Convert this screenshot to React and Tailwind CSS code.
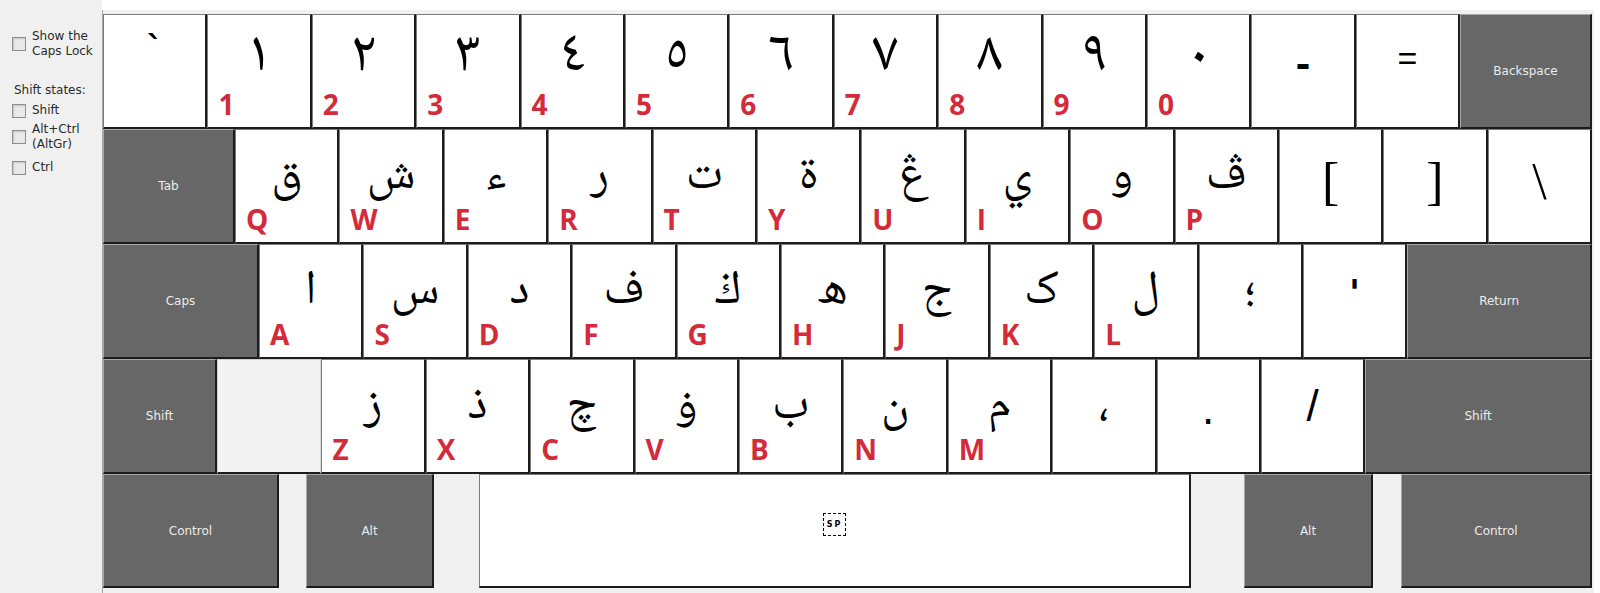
const ui = { fontFamily: '"DejaVu Sans", "Liberation Sans", sans-serif' };
const arabic = { fontFamily: '"Noto Naskh Arabic", "Noto Sans Arabic", "DejaVu Sans", sans-serif' };
const latin = { fontFamily: '"Open Sans", "Liberation Sans", sans-serif' };

const rows = [
  [
    { a: '`', f: 'grave' },
    { a: '١', l: '1', f: 'digit' },
    { a: '٢', l: '2', f: 'digit' },
    { a: '٣', l: '3', f: 'digit' },
    { a: '٤', l: '4', f: 'digit' },
    { a: '٥', l: '5', f: 'digit' },
    { a: '٦', l: '6', f: 'digit' },
    { a: '٧', l: '7', f: 'digit' },
    { a: '٨', l: '8', f: 'digit' },
    { a: '٩', l: '9', f: 'digit' },
    { a: '٠', l: '0', f: 'digit' },
    { a: '-', f: 'dash' },
    { a: '=', f: 'equals' },
    { mod: 'Backspace', w: 'w-[131.8px]' },
  ],
  [
    { mod: 'Tab', w: 'w-[132px]' },
    { a: 'ق', l: 'Q' },
    { a: 'ش', l: 'W' },
    { a: 'ء', l: 'E' },
    { a: 'ر', l: 'R' },
    { a: 'ت', l: 'T' },
    { a: 'ة', l: 'Y' },
    { a: 'ڠ', l: 'U' },
    { a: 'ي', l: 'I' },
    { a: 'و', l: 'O' },
    { a: 'ڤ', l: 'P' },
    { a: '[', f: 'serif' },
    { a: ']', f: 'serif' },
    { a: '\\', f: 'serif' },
  ],
  [
    { mod: 'Caps', w: 'w-[156px]' },
    { a: 'ا', l: 'A' },
    { a: 'س', l: 'S' },
    { a: 'د', l: 'D' },
    { a: 'ف', l: 'F' },
    { a: 'ڬ', l: 'G' },
    { a: 'ه', l: 'H' },
    { a: 'ج', l: 'J' },
    { a: 'ک', l: 'K' },
    { a: 'ل', l: 'L' },
    { a: '؛' },
    { a: "'", f: 'quote' },
    { mod: 'Return', w: 'w-[184.6px]' },
  ],
  [
    { mod: 'Shift', w: 'w-[114px]' },
    { blank: true },
    { a: 'ز', l: 'Z' },
    { a: 'ذ', l: 'X' },
    { a: 'چ', l: 'C' },
    { a: 'ۏ', l: 'V' },
    { a: 'ب', l: 'B' },
    { a: 'ن', l: 'N' },
    { a: 'م', l: 'M' },
    { a: '،' },
    { a: '.', f: 'dot' },
    { a: '/', f: 'slash' },
    { mod: 'Shift', w: 'w-[226.6px]' },
  ],
];

// per-glyph font tweaks for the non-letter keys
const glyphStyle = {
  digit: ['pt-[14px] text-[58px]', arabic],
  grave: ['pt-[16px] text-[34px] font-bold', ui],
  dash: ['pt-[32px] text-[36px] font-bold', ui],
  equals: ['pt-[26px] text-[34px]', { fontFamily: '"Liberation Sans", sans-serif' }],
  serif: ['pt-[26px] text-[52px]', { fontFamily: '"Liberation Serif", serif' }],
  quote: ['pt-[30px] text-[36px] font-bold', ui],
  dot: ['pt-[30px] text-[40px]', ui],
  slash: ['pt-[24px] text-[44px]', { fontFamily: '"Liberation Sans", sans-serif' }],
};

function ModKey({ label, w }) {
  return (
    <div
      className={`${w} shrink-0 h-full flex items-center justify-center bg-[#676767] border-t border-l border-r-2 border-b-2 border-t-[#a8a8a8] border-l-[#a8a8a8] border-r-[#1c1c1c] border-b-[#1c1c1c] text-[12px] text-[#ececec]`}
      style={ui}
    >
      {label}
    </div>
  );
}

function CharKey({ k }) {
  if (k.blank) {
    return (
      <div className="w-[104.4px] shrink-0 h-full bg-[#f3f3f3] border-t border-l border-r border-b-2 border-t-[#d0d0d0] border-l-[#d0d0d0] border-r-[#d8d8d8] border-b-[#1c1c1c]" />
    );
  }
  const [cls, font] = glyphStyle[k.f] || ['pt-[24px] text-[48px]', arabic];
  return (
    <div className="w-[104.4px] shrink-0 h-full flex flex-col bg-white border-t border-l border-r-2 border-b-2 border-t-[#7c7c7c] border-l-[#7c7c7c] border-r-[#1c1c1c] border-b-[#1c1c1c]">
      <div className={`${cls} text-center leading-none text-black`} style={font}>
        {k.a}
      </div>
      {k.l && (
        <div
          className="mt-auto pl-[10px] pb-[9px] text-[28px] leading-none font-bold text-[#d42b3b]"
          style={latin}
        >
          {k.l}
        </div>
      )}
    </div>
  );
}

function Check({ children }) {
  return (
    <div className="flex items-center gap-[6px]">
      <span className="w-[14px] h-[14px] shrink-0 border border-[#8e8e8e] bg-[#e9e9e9] shadow-[inset_1px_1px_2px_#c4c4c4]" />
      <span className="leading-[15px]">{children}</span>
    </div>
  );
}

export default function App() {
  return (
    <div className="w-[1600px] h-[593px] bg-white flex overflow-hidden">
      <aside className="w-[102px] shrink-0 h-full bg-[#f0f0f0] pt-[29px] pl-[12px] text-[12px] text-[#2b2b2b]" style={ui}>
        <Check>
          Show the
          <br />
          Caps Lock
        </Check>
        <p className="mt-[24px] ml-[2px] leading-[15px]">Shift states:</p>
        <div className="mt-[5px]">
          <Check>Shift</Check>
        </div>
        <div className="mt-[4px]">
          <Check>
            Alt+Ctrl
            <br />
            (AltGr)
          </Check>
        </div>
        <div className="mt-[8px]">
          <Check>Ctrl</Check>
        </div>
      </aside>

      <main className="mt-[10px] w-[1492px] shrink-0 bg-[#f0f0f0] border-l border-[#a6a6a6] pt-[4px] flex flex-col">
        {rows.map((row, i) => (
          <div key={i} className="flex h-[115px]">
            {row.map((k, j) =>
              k.mod ? <ModKey key={j} label={k.mod} w={k.w} /> : <CharKey key={j} k={k} />
            )}
          </div>
        ))}
        <div className="flex h-[114px]">
          <ModKey label="Control" w="w-[176px]" />
          <div className="w-[27px] shrink-0" />
          <ModKey label="Alt" w="w-[128px]" />
          <div className="w-[45px] shrink-0" />
          <div className="w-[712px] shrink-0 h-full flex items-center justify-center pb-[12px] bg-white border-t border-l border-r-2 border-b-2 border-t-[#7c7c7c] border-l-[#7c7c7c] border-r-[#1c1c1c] border-b-[#1c1c1c]">
            <span className="w-[23px] h-[23px] flex items-center justify-center border border-dashed border-black text-[8px] font-bold tracking-[2px] text-black" style={ui}>
              SP
            </span>
          </div>
          <div className="w-[53px] shrink-0" />
          <ModKey label="Alt" w="w-[129px]" />
          <div className="w-[28px] shrink-0" />
          <ModKey label="Control" w="w-[191px]" />
        </div>
      </main>
    </div>
  );
}
